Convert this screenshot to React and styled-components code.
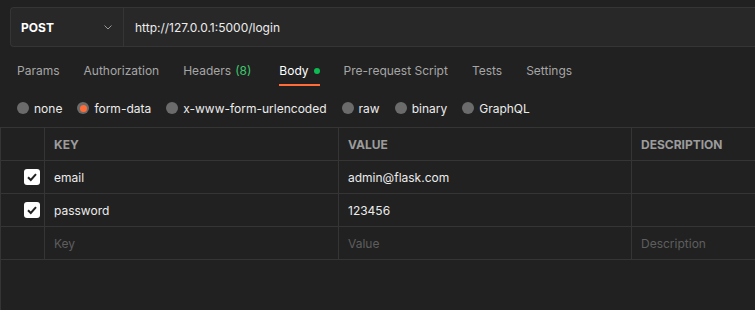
import styled, { createGlobalStyle } from "styled-components";

const GlobalStyle = createGlobalStyle`
  html, body {
    margin: 0;
    padding: 0;
    background: #212121;
    font-family: Inter, "Noto Sans", "Liberation Sans", sans-serif;
  }
  #root {
    width: 755px;
    height: 310px;
    overflow: hidden;
  }
`;

const Page = styled.div`
  width: 755px;
  height: 310px;
  background: #212121;
  display: flex;
  flex-direction: column;
`;

const UrlBar = styled.div`
  margin: 7px 0 0 10px;
  height: 38px;
  display: flex;
  background: #282828;
  border: 1px solid #353535;
  border-right: none;
  border-radius: 4px 0 0 4px;
`;

const MethodSelect = styled.div`
  width: 113px;
  box-sizing: border-box;
  padding: 0 10px 0 10px;
  display: flex;
  align-items: center;
  justify-content: space-between;
  border-right: 1px solid #353535;
  color: #ffffff;
  font-weight: 700;
  font-size: 12px;
`;

const UrlText = styled.div`
  flex: 1;
  display: flex;
  align-items: center;
  padding-left: 11px;
  color: #ececec;
  font-size: 12px;
`;

const Tabs = styled.div`
  display: flex;
  padding-left: 17px;
  margin-top: 10px;
  gap: 24px;
`;

const Tab = styled.div`
  position: relative;
  font-size: 12px;
  color: ${(p) => (p.active ? "#ffffff" : "#a6a6a6")};
  padding: 6px 0 8px;
  margin-right: ${(p) => (p.wide ? "4px" : "0")};
  display: flex;
  align-items: center;
  gap: 4px;
  &::after {
    content: "";
    display: ${(p) => (p.active ? "block" : "none")};
    position: absolute;
    left: 0;
    right: 0;
    bottom: 0;
    height: 2px;
    background: #ff6c37;
  }
`;

const Count = styled.span`
  color: #3ec76c;
`;

const Dot = styled.span`
  width: 6px;
  height: 6px;
  border-radius: 50%;
  background: #0cbb52;
  margin-left: 1px;
`;

const Radios = styled.div`
  display: flex;
  align-items: center;
  padding-left: 17px;
  height: 38px;
  margin-top: 3px;
  gap: 15px;
`;

const RadioItem = styled.label`
  display: flex;
  align-items: center;
  gap: 5px;
  font-size: 12px;
  color: #ececec;
`;

const RadioCircle = styled.span`
  width: 12px;
  height: 12px;
  border-radius: 50%;
  background: #6b6b6b;
  display: flex;
  align-items: center;
  justify-content: center;
  &::after {
    content: "";
    width: 7px;
    height: 7px;
    border-radius: 50%;
    background: #ff6c37;
    display: ${(p) => (p.checked ? "block" : "none")};
  }
`;

const Table = styled.div`
  border-top: 1px solid #353535;
  border-left: 1px solid #353535;
  flex: 1;
`;

const Row = styled.div`
  display: grid;
  grid-template-columns: 44px 294px 293px 1fr;
  height: 33px;
  box-sizing: border-box;
  border-bottom: 1px solid #353535;
`;

const Cell = styled.div`
  display: flex;
  align-items: center;
  padding-left: ${(p) => (p.check ? "23px" : "9px")};
  border-right: ${(p) => (p.last ? "none" : "1px solid #353535")};
  font-size: 12px;
  font-weight: ${(p) => (p.head ? 700 : 400)};
  color: ${(p) => (p.head ? "#9c9c9c" : p.placeholder ? "#5e5e5e" : "#ececec")};
  white-space: nowrap;
  overflow: hidden;
`;

const CheckBox = styled.span`
  width: 16px;
  height: 16px;
  border-radius: 3px;
  background: #ffffff;
  display: flex;
  align-items: center;
  justify-content: center;
`;

const Chevron = () => (
  <svg width="10" height="10" viewBox="0 0 10 10">
    <path d="M1.5 3.5 L5 7 L8.5 3.5" stroke="#9a9a9a" strokeWidth="1" fill="none" />
  </svg>
);

const Check = () => (
  <svg width="12" height="12" viewBox="0 0 12 12">
    <path d="M2 6.2 L4.8 9 L10 3.2" stroke="#212121" strokeWidth="2" fill="none" />
  </svg>
);

const tabs = ["Params", "Authorization", "Headers", "Body", "Pre-request Script", "Tests", "Settings"];
const bodyTypes = ["none", "form-data", "x-www-form-urlencoded", "raw", "binary", "GraphQL"];
const rows = [
  { key: "email", value: "admin@flask.com" },
  { key: "password", value: "123456" },
];

const App = () => {
  return (
    <Page>
      <GlobalStyle />
      <UrlBar>
        <MethodSelect>
          POST
          <Chevron />
        </MethodSelect>
        <UrlText>http://127.0.0.1:5000/login</UrlText>
      </UrlBar>
      <Tabs>
        {tabs.map((t) => (
          <Tab key={t} active={t === "Body"} wide={t === "Headers"}>
            {t}
            {t === "Headers" && <Count>(8)</Count>}
            {t === "Body" && <Dot />}
          </Tab>
        ))}
      </Tabs>
      <Radios>
        {bodyTypes.map((b) => (
          <RadioItem key={b}>
            <RadioCircle checked={b === "form-data"} />
            {b}
          </RadioItem>
        ))}
      </Radios>
      <Table>
        <Row>
          <Cell check />
          <Cell head>KEY</Cell>
          <Cell head>VALUE</Cell>
          <Cell head last>DESCRIPTION</Cell>
        </Row>
        {rows.map((r) => (
          <Row key={r.key}>
            <Cell check>
              <CheckBox>
                <Check />
              </CheckBox>
            </Cell>
            <Cell>{r.key}</Cell>
            <Cell>{r.value}</Cell>
            <Cell last />
          </Row>
        ))}
        <Row>
          <Cell check />
          <Cell placeholder>Key</Cell>
          <Cell placeholder>Value</Cell>
          <Cell placeholder last>Description</Cell>
        </Row>
      </Table>
    </Page>
  );
};

export default App;
